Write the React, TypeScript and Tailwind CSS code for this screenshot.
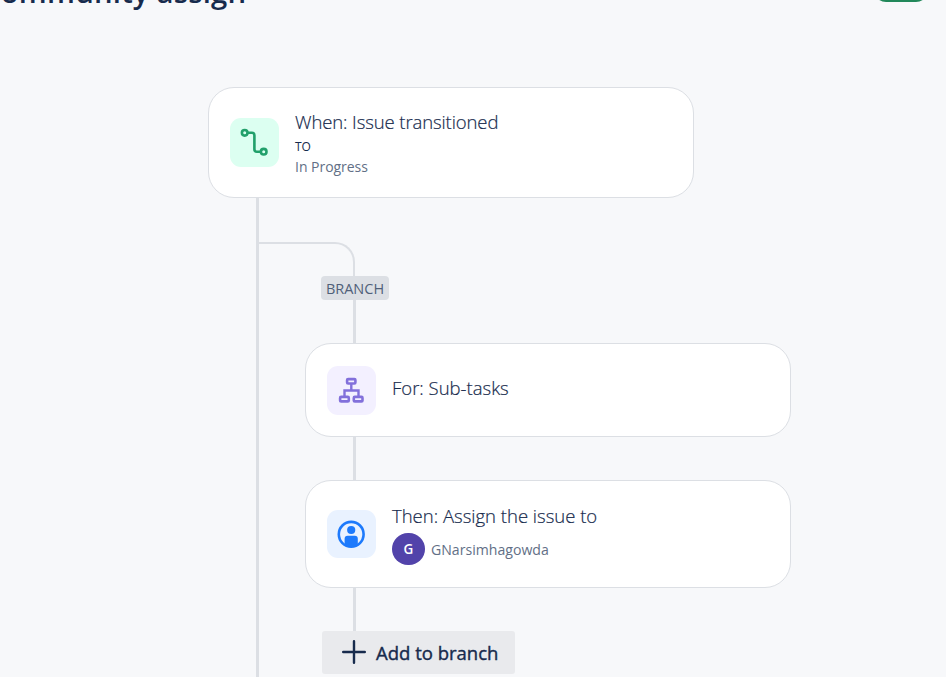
import type { ReactNode } from "react";

const line = "bg-[#dcdfe4]";

function Card({ className, children }: { className: string; children: ReactNode }) {
  return (
    <div className={`flex w-[486px] shrink-0 rounded-[26px] border border-[#dcdfe4] bg-white pl-[21px] ${className}`}>
      {children}
    </div>
  );
}

function Tile({ className, children }: { className: string; children: ReactNode }) {
  return <div className={`flex w-[49px] shrink-0 items-center justify-center rounded-[11px] ${className}`}>{children}</div>;
}

function Title({ className, children }: { className: string; children: ReactNode }) {
  return (
    <div className={`text-[18.5px] leading-6 font-light text-[#172b4d] [-webkit-text-stroke:0.2px_#172b4d] ${className}`}>
      {children}
    </div>
  );
}

function TransitionIcon() {
  return (
    <svg width="49" height="49" viewBox="0 0 49 49" fill="none" stroke="#22a06b" strokeWidth="2.6">
      <circle cx="14.7" cy="14.8" r="2.8" />
      <circle cx="33.7" cy="33.7" r="2.8" />
      <path d="M17.7 14.8h4.2q2.5 0 2.5 2.5v13.9q0 2.5 2.5 2.5h3.8" />
    </svg>
  );
}

function HierarchyIcon() {
  return (
    <svg width="49" height="49" viewBox="0 0 49 49" fill="none" stroke="#8270db" strokeWidth="2.6">
      <rect x="20.1" y="13.1" width="8.3" height="4.4" rx="1" />
      <rect x="13.1" y="30.9" width="8.7" height="4.5" rx="1" />
      <rect x="26.8" y="30.9" width="8.7" height="4.5" rx="1" />
      <path d="M24.3 17.5v7M17.5 31v-6.5h14V31" strokeWidth="2.4" />
    </svg>
  );
}

function PersonIcon() {
  return (
    <svg width="49" height="48" viewBox="0 0 49 48" fill="#1d7afc">
      <circle cx="24.2" cy="24.3" r="12.4" fill="none" stroke="#1d7afc" strokeWidth="2.6" />
      <circle cx="24.2" cy="20" r="4.1" />
      <path d="M17.6 34.5v-5.8q0-3 3-3h7.2q3 0 3 3v5.8q-3 2.6-6.6 2.6t-6.6-2.6z" />
    </svg>
  );
}

export default function App() {
  return (
    <div className="flex h-[677px] w-[946px] flex-col overflow-hidden bg-[#f7f8fa] font-['Open_Sans','Noto_Sans',sans-serif] text-[#172b4d]">
      <header className="flex h-[87px] shrink-0 items-start justify-between pr-[18px]">
        <h1 className="-mt-[26px] -ml-[18px] text-[29.3px] leading-9 font-semibold tracking-[0.2px] whitespace-nowrap">Community assign</h1>
        <div className="-mt-[22px] h-6 w-[54px] rounded-full bg-[#22885a]" />
      </header>

      <Card className="ml-[208px] h-[111px] pt-[30px]">
        <Tile className="h-[49px] bg-[#dcfff1]"><TransitionIcon /></Tile>
        <div className="ml-4 -mt-[8px]">
          <Title className="tracking-[-0.1px]">When: Issue transitioned</Title>
          <div className="mt-px text-[17px] leading-5 [font-variant-caps:all-small-caps]">to</div>
          <div className="mt-[2px] text-[14px] leading-5 tracking-[-0.03px] text-[#626f86]">In Progress</div>
        </div>
      </Card>

      <div className="ml-[256px] flex min-h-0 flex-1">
        <div className={`w-[3px] shrink-0 ${line}`} />
        <div className="flex flex-col items-start">
          <div className="mt-[44px] h-[34px] w-[96px] shrink-0 rounded-tr-[20px] border-t-2 border-r-2 border-[#dcdfe4]" />
          <div className="ml-[62px] flex h-6 w-[68px] shrink-0 items-center justify-center rounded-[4px] bg-[#dcdfe4] pt-[2px] text-[14.5px] text-[#505f79]">
            BRANCH
          </div>
          <div className={`ml-[94px] h-[43px] w-[3px] shrink-0 ${line}`} />
          <Card className="ml-[46px] h-[94px] pt-[22px]">
            <Tile className="h-[49px] bg-[#f3f0ff]"><HierarchyIcon /></Tile>
            <Title className="mt-[10px] ml-4">For: Sub-tasks</Title>
          </Card>
          <div className={`ml-[94px] h-[43px] w-[3px] shrink-0 ${line}`} />
          <Card className="ml-[46px] h-[108px] pt-[29px]">
            <Tile className="h-[48px] bg-[#e9f2ff]"><PersonIcon /></Tile>
            <div className="-mt-[6px] ml-4">
              <Title className="">Then: Assign the issue to</Title>
              <div className="mt-[5px] flex items-center">
                <div className="flex h-8 w-[33px] items-center justify-center rounded-full bg-[#5243aa] text-[13.5px] font-semibold text-white">G</div>
                <div className="mt-[2px] ml-[6px] text-[14.1px] leading-5 text-[#626f86]">GNarsimhagowda</div>
              </div>
            </div>
          </Card>
          <div className={`ml-[94px] h-[43px] w-[3px] shrink-0 ${line}`} />
          <button className="ml-[63px] flex h-[43px] w-[193px] shrink-0 items-center rounded-[3px] bg-[#e9eaed] pl-5 text-[18.5px] font-normal whitespace-nowrap [-webkit-text-stroke:0.4px_#172b4d]">
            <svg className="-mt-px" width="24" height="24" viewBox="0 0 24 24" stroke="#172b4d" strokeWidth="2.4" strokeLinecap="round">
              <path d="M12 1.2v21.6M1.2 12h21.6" />
            </svg>
            <span className="mt-px ml-[10px]">Add to branch</span>
          </button>
        </div>
      </div>
    </div>
  );
}
